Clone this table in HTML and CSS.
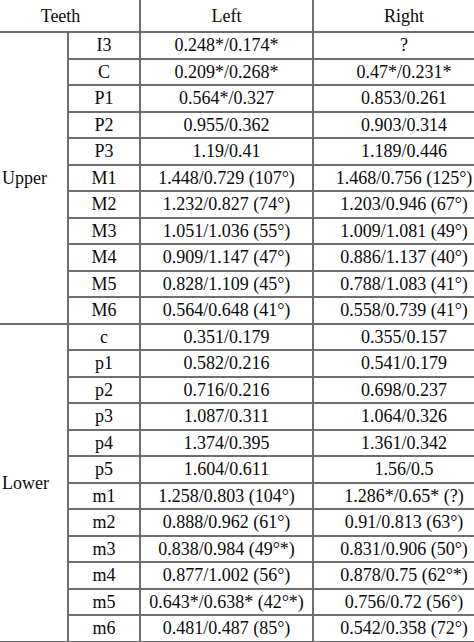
FILE: index.html
```html
<!DOCTYPE html>
<html>
<head>
<meta charset="utf-8">
<link rel="stylesheet" href="styles.css">
</head>
<body>
<table class="teeth">
  <colgroup>
    <col class="c-group"><col class="c-tooth"><col class="c-left"><col class="c-right">
  </colgroup>
  <thead>
    <tr class="head"><th colspan="2">Teeth</th><th class="vl">Left</th><th class="vl">Right</th></tr>
  </thead>
  <tbody class="upper">
    <tr><td class="group" rowspan="11">Upper</td><td class="vl">I3</td><td class="vl">0.248*/0.174*</td><td class="vl">?</td></tr>
    <tr><td class="vl">C</td><td class="vl">0.209*/0.268*</td><td class="vl">0.47*/0.231*</td></tr>
    <tr><td class="vl">P1</td><td class="vl">0.564*/0.327</td><td class="vl">0.853/0.261</td></tr>
    <tr><td class="vl">P2</td><td class="vl">0.955/0.362</td><td class="vl">0.903/0.314</td></tr>
    <tr><td class="vl">P3</td><td class="vl">1.19/0.41</td><td class="vl">1.189/0.446</td></tr>
    <tr><td class="vl">M1</td><td class="vl">1.448/0.729 (107°)</td><td class="vl">1.468/0.756 (125°)</td></tr>
    <tr><td class="vl">M2</td><td class="vl">1.232/0.827 (74°)</td><td class="vl">1.203/0.946 (67°)</td></tr>
    <tr><td class="vl">M3</td><td class="vl">1.051/1.036 (55°)</td><td class="vl">1.009/1.081 (49°)</td></tr>
    <tr><td class="vl">M4</td><td class="vl">0.909/1.147 (47°)</td><td class="vl">0.886/1.137 (40°)</td></tr>
    <tr><td class="vl">M5</td><td class="vl">0.828/1.109 (45°)</td><td class="vl">0.788/1.083 (41°)</td></tr>
    <tr><td class="vl">M6</td><td class="vl">0.564/0.648 (41°)</td><td class="vl">0.558/0.739 (41°)</td></tr>
  </tbody>
  <tbody class="lower">
    <tr><td class="group" rowspan="12">Lower</td><td class="vl">c</td><td class="vl">0.351/0.179</td><td class="vl">0.355/0.157</td></tr>
    <tr><td class="vl">p1</td><td class="vl">0.582/0.216</td><td class="vl">0.541/0.179</td></tr>
    <tr><td class="vl">p2</td><td class="vl">0.716/0.216</td><td class="vl">0.698/0.237</td></tr>
    <tr><td class="vl">p3</td><td class="vl">1.087/0.311</td><td class="vl">1.064/0.326</td></tr>
    <tr><td class="vl">p4</td><td class="vl">1.374/0.395</td><td class="vl">1.361/0.342</td></tr>
    <tr><td class="vl">p5</td><td class="vl">1.604/0.611</td><td class="vl">1.56/0.5</td></tr>
    <tr><td class="vl">m1</td><td class="vl">1.258/0.803 (104°)</td><td class="vl">1.286*/0.65* (?)</td></tr>
    <tr><td class="vl">m2</td><td class="vl">0.888/0.962 (61°)</td><td class="vl">0.91/0.813 (63°)</td></tr>
    <tr><td class="vl">m3</td><td class="vl">0.838/0.984 (49°*)</td><td class="vl">0.831/0.906 (50°)</td></tr>
    <tr><td class="vl">m4</td><td class="vl">0.877/1.002 (56°)</td><td class="vl">0.878/0.75 (62°*)</td></tr>
    <tr><td class="vl">m5</td><td class="vl">0.643*/0.638* (42°*)</td><td class="vl">0.756/0.72 (56°)</td></tr>
    <tr><td class="vl">m6</td><td class="vl">0.481/0.487 (85°)</td><td class="vl">0.542/0.358 (72°)</td></tr>
  </tbody>
</table>
</body>
</html>
```
FILE: styles.css
```css
html, body {
  margin: 0;
  padding: 0;
  background: #ffffff;
  overflow: hidden;
}
body {
  width: 474px;
  height: 642px;
  font-family: "Liberation Serif", "Times New Roman", serif;
  color: #0a0a0a;
}
.teeth {
  margin-left: -18px;
  width: 512px;
  border-collapse: collapse;
  table-layout: fixed;
  font-size: 18px;
}
.c-group { width: 86px; }
.c-tooth { width: 72px; }
.c-left { width: 173px; }
.c-right { width: 181px; }
.teeth th,
.teeth td {
  padding: 0;
  text-align: center;
  vertical-align: middle;
  font-weight: normal;
  white-space: nowrap;
  line-height: 20px;
}
.head th {
  height: 31px;
  border-bottom: 2px solid #6e6e6e;
}
.teeth tbody tr td {
  height: 24.5px;
  border-bottom: 2px solid #6e6e6e;
}
.teeth .vl {
  border-left: 2px solid #6e6e6e;
}
.teeth td.group {
  text-align: left;
  padding-left: 20px;
}
```
